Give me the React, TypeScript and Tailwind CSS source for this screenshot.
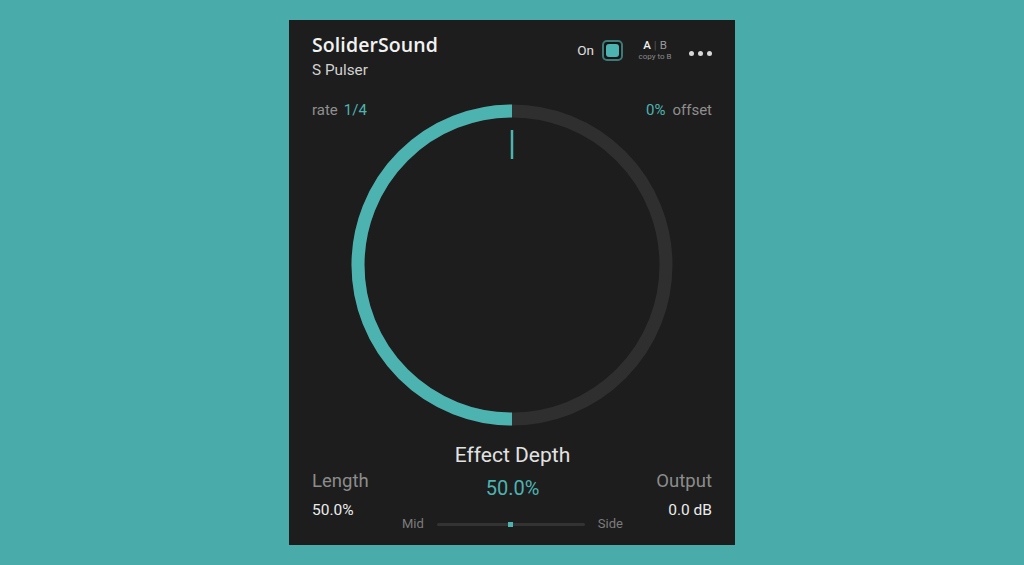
import React from "react";

export default function App() {
  const teal = "#4db3b1";
  return (
    <div className="w-[1024px] h-[565px] bg-[#4aabab] flex justify-center pt-[20px]" style={{ fontFamily: "Roboto, 'Noto Sans', sans-serif" }}>
      <div className="w-[446px] h-[525px] bg-[#1d1d1d] flex flex-col px-[23px]">
        {/* Header */}
        <div className="flex justify-between items-start pt-[13px]">
          <div className="flex flex-col">
            <div className="text-[19.5px] leading-[24px] font-semibold text-[#f2f2f2] tracking-[0.1px]" style={{ fontFamily: "'Open Sans', Roboto, sans-serif" }}>SoliderSound</div>
            <div className="text-[15.3px] leading-[20px] text-[#d2d2d2] mt-[3px]">S Pulser</div>
          </div>
          <div className="flex items-center pt-[6px]">
            <span className="text-[13.5px] text-[#e0e0e0] mr-[8px]">On</span>
            <div className="w-[21px] h-[21px] rounded-[5px] border-[2px] border-[#3d7a78] bg-[#141414] flex items-center justify-center">
              <div className="w-[13px] h-[13px] rounded-[3px] bg-[#4db3b1]" />
            </div>
            <div className="flex flex-col items-center ml-[14px] w-[36px]">
              <div className="text-[11.5px] leading-[12px] text-[#9a9a9a]">
                <span className="text-[#f0f0f0] font-medium">A</span>
                <span className="text-[#555] mx-[3px]">|</span>
                <span>B</span>
              </div>
              <div className="text-[8px] leading-[10px] text-[#8a8a8a] mt-[1px]">copy to B</div>
            </div>
            <div className="flex gap-[4px] ml-[16px] mt-[5px]">
              <div className="w-[5px] h-[5px] rounded-full bg-[#d8d8d8]" />
              <div className="w-[5px] h-[5px] rounded-full bg-[#d8d8d8]" />
              <div className="w-[5px] h-[5px] rounded-full bg-[#d8d8d8]" />
            </div>
          </div>
        </div>

        {/* Circle area */}
        <div className="grid mt-[18px]">
          <div className="[grid-area:1/1] flex justify-between items-start pt-[3px] text-[15px] leading-[18px]">
            <div>
              <span className="text-[#8f8f8f]">rate</span>
              <span className="ml-[6px]" style={{ color: teal }}>1/4</span>
            </div>
            <div>
              <span style={{ color: teal }}>0%</span>
              <span className="ml-[7px] text-[#8f8f8f]">offset</span>
            </div>
          </div>
          <div className="[grid-area:1/1] flex justify-center pt-[6px]">
            <svg width="322" height="322" viewBox="0 0 322 322">
              <circle cx="161" cy="161" r="154" fill="none" stroke="#2f2f2f" strokeWidth="13" />
              <path d="M161 7 A154 154 0 0 0 161 315" fill="none" stroke={teal} strokeWidth="13" />
              <line x1="161" y1="26" x2="161" y2="55" stroke={teal} strokeWidth="2.5" />
            </svg>
          </div>
        </div>

        {/* Bottom */}
        <div className="flex justify-between mt-[16px]">
          <div className="flex flex-col pt-[28px]">
            <div className="text-[18.5px] leading-[22px] text-[#8c8c8c]">Length</div>
            <div className="text-[15.5px] leading-[18px] text-[#ececec] mt-[9px]">50.0%</div>
          </div>
          <div className="flex flex-col items-center">
            <div className="text-[21px] leading-[26px] text-[#e2e2e2]">Effect Depth</div>
            <div className="text-[20px] leading-[24px] mt-[8px]" style={{ color: teal }}>50.0%</div>
            <div className="flex items-center mt-[16px]">
              <span className="text-[13px] leading-[16px] text-[#7c7c7c]">Mid</span>
              <div className="w-[148px] h-[3px] rounded-full bg-[#333333] mx-[13px] flex items-center justify-center">
                <div className="w-[5px] h-[5px] bg-[#4db3b1]" />
              </div>
              <span className="text-[13px] leading-[16px] text-[#7c7c7c]">Side</span>
            </div>
          </div>
          <div className="flex flex-col items-end pt-[28px]">
            <div className="text-[18.5px] leading-[22px] text-[#8c8c8c]">Output</div>
            <div className="text-[15.5px] leading-[18px] text-[#ececec] mt-[9px]">0.0 dB</div>
          </div>
        </div>
      </div>
    </div>
  );
}
